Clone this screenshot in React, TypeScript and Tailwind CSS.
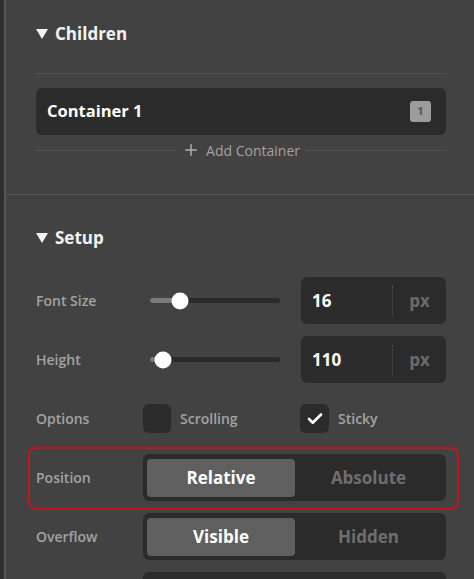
import { Plus, Check } from "lucide-react";

const font = { fontFamily: '"Open Sans", "Noto Sans", sans-serif' };

function Caret() {
  return (
    <svg width="12" height="10" viewBox="0 0 12 10" className="shrink-0">
      <polygon points="0,0 12,0 6,10" fill="#f2f2f2" />
    </svg>
  );
}

function SectionTitle({ title }: { title: string }) {
  return (
    <div className="flex h-6 items-center gap-[7px]">
      <Caret />
      <span className="text-[17px] font-bold leading-6 text-[#f2f2f2]">{title}</span>
    </div>
  );
}

function Label({ text }: { text: string }) {
  return <div className="w-[107px] shrink-0 text-[14px] font-semibold text-[#a3a3a3]">{text}</div>;
}

function SliderRow({ label, value, pct }: { label: string; value: string; pct: number }) {
  return (
    <div className="flex h-[47px] items-center">
      <Label text={label} />
      <div className="relative ml-[7px] h-[5px] w-[130px] rounded-full bg-[#2b2b2b]">
        <div className="h-full rounded-full bg-[#7a7a7a]" style={{ width: `${pct}%` }} />
        <div
          className="absolute top-1/2 h-[17px] w-[17px] -translate-x-1/2 -translate-y-1/2 rounded-full bg-white"
          style={{ left: `${pct}%` }}
        />
      </div>
      <div className="ml-[21px] flex h-[47px] w-[145px] items-center rounded-md bg-[#2b2b2b]">
        <span className="w-[91px] pl-[11px] text-[17px] font-bold text-white">{value}</span>
        <div className="h-[30px] border-l border-dotted border-[#555]" />
        <span className="flex-1 text-center text-[17px] font-bold text-[#6b6b6b]">px</span>
      </div>
    </div>
  );
}

function Segmented({ a, b }: { a: string; b: string }) {
  return (
    <div className="flex h-[47px] w-[303px] rounded-md bg-[#2b2b2b] p-[4px] pt-[5px]">
      <div className="flex w-[148px] items-center justify-center rounded-[4px] bg-[#5f5f5f] text-[17px] font-bold text-white">
        {a}
      </div>
      <div className="flex flex-1 items-center justify-center text-[17px] font-bold text-[#6e6e6e]">{b}</div>
    </div>
  );
}

export default function App() {
  return (
    <div className="flex h-[579px] w-[474px] overflow-hidden bg-[#424242]" style={font}>
      <div className="w-[4px] shrink-0 bg-[#2e2e2e]" />
      <div className="w-[2px] shrink-0 bg-[#565656]" />
      <div className="flex-1">
        {/* Children */}
        <section className="pl-[30px] pr-[28px] pt-[22px]">
          <SectionTitle title="Children" />
          <div className="mt-[27px] border-t border-dotted border-[#5c5c5c]" />
          <div className="mt-[14px] flex h-[47px] items-center justify-between rounded-md bg-[#2b2b2b] pl-[11px] pr-[15px]">
            <span className="text-[16.5px] font-bold text-white">Container 1</span>
            <span className="flex h-[21px] w-[21px] items-center justify-center rounded-[3px] bg-[#9c9c9c] text-[11px] font-bold text-[#555]">
              1
            </span>
          </div>
          <div className="flex h-[30px] items-center">
            <div className="flex-1 border-t border-dotted border-[#5c5c5c]" />
            <div className="flex items-center gap-[6px] px-[6px] text-[14px] text-[#a3a3a3]">
              <Plus size={18} strokeWidth={2} className="text-[#b0b0b0]" />
              <span>Add Container</span>
            </div>
            <div className="flex-1 border-t border-dotted border-[#5c5c5c]" />
          </div>
        </section>
        <div className="mt-[29px] border-t border-[#565656]" />
        {/* Setup */}
        <section className="pl-[30px] pr-[28px] pt-[31px]">
          <SectionTitle title="Setup" />
          <div className="mt-[27px] flex flex-col gap-[12px]">
            <SliderRow label="Font Size" value="16" pct={23} />
            <SliderRow label="Height" value="110" pct={10} />
            <div className="flex h-[47px] items-center">
              <Label text="Options" />
              <div className="flex w-[157px] items-center gap-[9px]">
                <div className="h-[29px] w-[28px] rounded-md bg-[#2b2b2b]" />
                <span className="text-[14px] font-semibold text-[#a3a3a3]">Scrolling</span>
              </div>
              <div className="flex items-center gap-[9px]">
                <div className="flex h-[29px] w-[29px] items-center justify-center rounded-md bg-[#2b2b2b] text-white">
                  <Check size={18} strokeWidth={3.5} />
                </div>
                <span className="text-[14px] font-semibold text-[#a3a3a3]">Sticky</span>
              </div>
            </div>
            <div className="relative flex h-[47px] items-center">
              <Label text="Position" />
              <Segmented a="Relative" b="Absolute" />
              <div className="pointer-events-none absolute -bottom-[9px] -left-[8px] -right-[13px] -top-[7px] rounded-lg border-2 border-[#c4141f]" />
            </div>
            <div className="flex h-[47px] items-center">
              <Label text="Overflow" />
              <Segmented a="Visible" b="Hidden" />
            </div>
            <div className="flex h-[47px] items-center">
              <Label text="" />
              <div className="h-[47px] w-[303px] rounded-md bg-[#2b2b2b]" />
            </div>
          </div>
        </section>
      </div>
    </div>
  );
}
